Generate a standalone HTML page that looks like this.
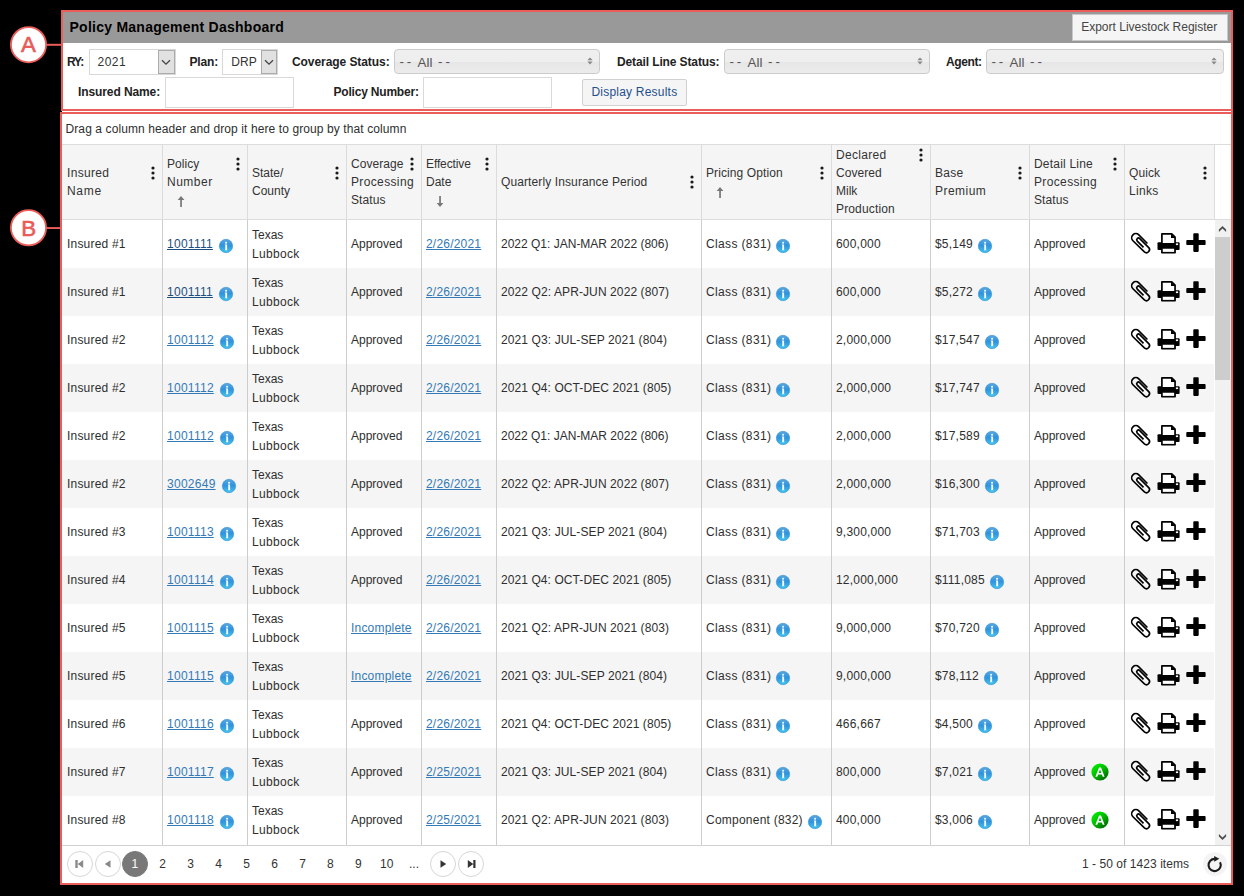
<!DOCTYPE html><html><head><meta charset="utf-8"><title>Policy Management Dashboard</title><style>
*{box-sizing:border-box;margin:0;padding:0}
html,body{width:1244px;height:896px;overflow:hidden;background:#000}
body{font-family:"Liberation Sans",sans-serif;font-size:12px;color:#333;position:relative}
.a{position:absolute}
.t{position:absolute;white-space:nowrap;line-height:19px;font-size:12px;color:#2e2e2e;letter-spacing:0.2px}
.z{letter-spacing:0}
.h{position:absolute;white-space:nowrap;line-height:18px;font-size:12px;color:#333}
.b{font-weight:bold;color:#222}
a.l{color:#337ab7;text-decoration:underline}
.lk{letter-spacing:.27px}
a.d{color:#1d4f80;text-decoration:underline}
.vl{position:absolute;width:1px;background:#cfcfcf}
.sel{position:absolute;height:25px;border:1px solid #cbcbcb;border-radius:4px;background:linear-gradient(#efefef 0,#eeeeee 50%,#e6e6e6 53%,#ececec 100%)}
.sel span{position:absolute;left:4.5px;top:3px;font-size:13.33px;line-height:19px;color:#555;white-space:nowrap}
.sel b{font-weight:normal;letter-spacing:2.9px;position:relative;top:-0.8px}
.inp{position:absolute;background:#fff;border:1px solid #d9d9d9}
.dd{position:absolute;background:#fff;border:1px solid #d8d8d8;height:26px}
.dd i{position:absolute;right:0;top:0;bottom:0;width:17px;background:#e1e1e1;border:1px solid #ababab}
.dd span{position:absolute;top:3px;font-size:12px;line-height:19px;color:#333}
.btn{position:absolute;background:#f5f5f5;border:1px solid #d0d0d0;border-radius:2px;font-size:12px;white-space:nowrap}
.pg{position:absolute;width:26px;height:26px;border-radius:13px;border:1px solid #d6d6d6;background:#fff}
.pn{position:absolute;width:28px;text-align:center;font-size:12px;line-height:19px;color:#333}
</style></head><body>
<svg width="0" height="0" style="position:absolute">
<defs>
<radialGradient id="gi" cx="50%" cy="35%" r="65%"><stop offset="0" stop-color="#3f9fe6"/><stop offset="0.7" stop-color="#2f94dc"/><stop offset="1" stop-color="#3bb6ea"/></radialGradient>
<linearGradient id="gi2" x1="0" y1="0" x2="0" y2="1"><stop offset="0" stop-color="#58a9e4"/><stop offset="0.45" stop-color="#2f93dc"/><stop offset="1" stop-color="#3fc4ee"/></linearGradient>
<linearGradient id="gg" x1="0.15" y1="0.1" x2="0.85" y2="0.9"><stop offset="0" stop-color="#00ee00"/><stop offset="0.5" stop-color="#00b800"/><stop offset="1" stop-color="#006a00"/></linearGradient>
<symbol id="info" viewBox="0 0 16 16"><circle cx="8" cy="8" r="6.7" fill="url(#gi2)" stroke="#3a8fd0" stroke-width="0.6"/><circle cx="8.1" cy="4.7" r="1.05" fill="#fff"/><path d="M6.8 6.5h2.3v5.3h0.3v0.4H6.9v-0.4h0.4V7.2H6.8z" fill="#fff"/></symbol>
<symbol id="ga" viewBox="0 0 18 18"><circle cx="9" cy="9" r="8.6" fill="url(#gg)"/><path d="M4.4 13.8L8 4.6H10L13.6 13.8H11.7L10.9 11.6H7.1L6.3 13.8ZM7.65 10.1H10.35L9 6.3Z" fill="#fff"/></symbol>
<symbol id="clip" viewBox="0 0 40 30"><g transform="rotate(45)"><path d="M26.1 -4.2 L13.9 -4.2 A4.15 4.15 0 0 0 13.9 4.1 L29.9 3.9 A3.08 3.08 0 0 0 29.9 -2.24 L17.2 -2.2 A1.74 1.74 0 0 0 17.2 1.3 L26.1 1.3" fill="none" stroke="#000" stroke-width="1.65"/></g></symbol>
<symbol id="prn" viewBox="0 0 40 30"><rect x="7.5" y="14.2" width="22.1" height="7.7" rx="1" fill="#000"/><path d="M11.9 15V5.85H21.7L25.05 9.2V15" fill="#fff" stroke="#000" stroke-width="1.7" stroke-linejoin="round"/><path d="M21 5.6V9.9H25.4z" fill="#000"/><rect x="25.9" y="15.4" width="2.2" height="1.7" fill="#fff"/><rect x="11.05" y="20.75" width="14.85" height="4.85" rx="0.8" fill="#000"/><rect x="12.75" y="20.75" width="11.4" height="3.15" fill="#fff"/></symbol>
<symbol id="plus" viewBox="0 0 20 20"><rect x="0.3" y="7.1" width="19.3" height="4.9" rx="0.8" fill="#000"/><rect x="7.3" y="0.2" width="5.4" height="18.7" rx="0.8" fill="#000"/></symbol>
<symbol id="dots" viewBox="0 0 4 14"><circle cx="2" cy="2" r="1.6" fill="#1a1a1a"/><circle cx="2" cy="7" r="1.6" fill="#1a1a1a"/><circle cx="2" cy="12" r="1.6" fill="#1a1a1a"/></symbol>
<symbol id="updn" viewBox="0 0 8 12"><path d="M4 1.4L6.6 4.2H1.4z" fill="#888"/><path d="M4 8.6L6.6 5.6H1.4z" fill="#888"/></symbol>
</defs></svg>
<svg class="a" style="left:0;top:0" width="64" height="260" viewBox="0 0 64 260"><rect x="46" y="43.8" width="16" height="2" fill="#eb5d5a"/><circle cx="28.5" cy="44.7" r="17.6" fill="#fff" stroke="#eb5d5a" stroke-width="1.8"/><rect x="46" y="227.1" width="15" height="1.9" fill="#eb5d5a"/><circle cx="28.5" cy="227.8" r="17.6" fill="#fff" stroke="#eb5d5a" stroke-width="1.8"/></svg>
<div class="a" style="left:10px;top:32.2px;width:37px;text-align:center;font-size:22.3px;line-height:26px;color:#e95a58;-webkit-text-stroke:0.6px #e95a58">A</div>
<div class="a" style="left:10.3px;top:215.8px;width:37px;text-align:center;font-size:22.3px;line-height:26px;color:#e95a58;-webkit-text-stroke:0.6px #e95a58">B</div>
<div class="a" style="left:61px;top:10px;width:1172px;height:101px;background:#fff;border-style:solid;border-width:2px;border-color:#eb5d5a #eb5d5a #eb5d5a #eb5d5a"></div>
<div class="a" style="left:63px;top:12px;width:1168px;height:31px;background:#999"></div>
<div class="a b" style="left:69.5px;top:18px;font-size:14px;line-height:18px;color:#000;white-space:nowrap;letter-spacing:0.25px">Policy Management Dashboard</div>
<div class="btn" style="left:1072px;top:14px;width:156px;height:27px;line-height:25px;padding-left:8.2px;color:#444;border-color:#c8c8c8;border-radius:0">Export Livestock Register</div>
<div class="h b" style="left:67px;top:53px;letter-spacing:-1.1px">RY:</div>
<div class="dd" style="left:89px;top:49px;width:87px"><span style="left:7.6px;letter-spacing:.45px">2021</span><i></i><svg class="a" style="left:71px;top:8.6px" width="10" height="7" viewBox="0 0 10 7"><path d="M1 1.2L5 5.2L9 1.2" fill="none" stroke="#444" stroke-width="1.3"/></svg></div>
<div class="h b" style="left:189.5px;top:53px;letter-spacing:-0.15px">Plan:</div>
<div class="dd" style="left:222px;top:49px;width:56px"><span style="left:8.2px;letter-spacing:.1px">DRP</span><i style="width:16px"></i><svg class="a" style="left:41.3px;top:8.6px" width="10" height="7" viewBox="0 0 10 7"><path d="M1 1.2L5 5.2L9 1.2" fill="none" stroke="#444" stroke-width="1.3"/></svg></div>
<div class="h b" style="left:292px;top:53px;letter-spacing:-0.07px">Coverage Status:</div>
<div class="sel" style="left:394px;top:49px;width:206px"><span><b>--</b><u style="text-decoration:none;margin:0 5.7px 0 3.4px">All</u><b>--</b></span><svg class="a" style="right:4.6px;top:5.5px" width="8" height="12"><use href="#updn"/></svg></div>
<div class="h b" style="left:617px;top:53px;letter-spacing:-0.12px">Detail Line Status:</div>
<div class="sel" style="left:724px;top:49px;width:206px"><span><b>--</b><u style="text-decoration:none;margin:0 5.7px 0 3.4px">All</u><b>--</b></span><svg class="a" style="right:4.6px;top:5.5px" width="8" height="12"><use href="#updn"/></svg></div>
<div class="h b" style="left:946px;top:53px;letter-spacing:-0.4px">Agent:</div>
<div class="sel" style="left:986px;top:49px;width:238px"><span><b>--</b><u style="text-decoration:none;margin:0 5.7px 0 3.4px">All</u><b>--</b></span><svg class="a" style="right:4.6px;top:5.5px" width="8" height="12"><use href="#updn"/></svg></div>
<div class="h b" style="left:78px;top:83px;letter-spacing:-0.1px">Insured Name:</div>
<div class="inp" style="left:165px;top:77px;width:129px;height:31px"></div>
<div class="h b" style="left:333.5px;top:83px;letter-spacing:-0.2px">Policy Number:</div>
<div class="inp" style="left:423px;top:77px;width:129px;height:31px"></div>
<div class="btn" style="left:582px;top:79px;width:105px;height:27px;line-height:24px;padding-left:8.4px;color:#1f4f8c;letter-spacing:0.22px">Display Results</div>
<div class="a" style="left:62px;top:111px;width:1169px;height:1px;background:#fff"></div>
<div class="a" style="left:1231px;top:111px;width:2px;height:1px;background:#eb5d5a"></div>
<div class="a" style="left:60px;top:112px;width:1173px;height:773px;background:#fff;border-style:solid;border-width:2px;border-color:#eb5d5a #eb5d5a #eb5d5a #eb5d5a"></div>
<div class="h" style="left:65.5px;top:120px;color:#2e2e2e;letter-spacing:.1px">Drag a column header and drop it here to group by that column</div>
<div class="a" style="left:62px;top:144px;width:1153px;height:76px;background:#f5f5f5;border-top:1px solid #dcdcdc;border-bottom:1px solid #dcdcdc"></div>
<div class="a" style="left:1215px;top:144px;width:16px;height:76px;background:#fff;border-top:1px solid #dcdcdc;border-bottom:1px solid #dcdcdc"></div>
<div class="h" style="left:67px;top:164px"><span style="letter-spacing:0.32px">Insured</span><br><span style="letter-spacing:0.7px">Name</span></div>
<svg class="a" style="left:150.8px;top:165.5px" width="4" height="14"><use href="#dots"/></svg>
<div class="h" style="left:167px;top:155px"><span style="letter-spacing:0.05px">Policy</span><br><span style="letter-spacing:0.5px">Number</span></div>
<svg class="a" style="left:176px;top:194px" width="10" height="14" viewBox="0 0 10 14"><path d="M5 1.9L8.4 6H5.9V13H4.2V6H1.7z" fill="#777"/></svg>
<svg class="a" style="left:235.8px;top:156.5px" width="4" height="14"><use href="#dots"/></svg>
<div class="h" style="left:252px;top:164px">State/<br>County</div>
<svg class="a" style="left:334.8px;top:165.5px" width="4" height="14"><use href="#dots"/></svg>
<div class="h" style="left:351px;top:155px"><span style="letter-spacing:0.05px">Coverage</span><br><span style="letter-spacing:0.36px">Processing</span><br><span style="letter-spacing:0.08px">Status</span></div>
<svg class="a" style="left:409.8px;top:156.5px" width="4" height="14"><use href="#dots"/></svg>
<div class="h" style="left:426px;top:155px"><span style="letter-spacing:-0.12px">Effective</span><br>Date</div>
<svg class="a" style="left:435px;top:194px" width="10" height="14" viewBox="0 0 10 14"><path d="M5 13.1L8.4 9H5.9V2H4.2V9H1.7z" fill="#777"/></svg>
<svg class="a" style="left:484.8px;top:156.5px" width="4" height="14"><use href="#dots"/></svg>
<div class="h" style="left:501px;top:173px"><span style="letter-spacing:0.11px">Quarterly Insurance Period</span></div>
<svg class="a" style="left:689.8px;top:174.5px" width="4" height="14"><use href="#dots"/></svg>
<div class="h" style="left:706px;top:164px"><span style="letter-spacing:0.1px">Pricing Option</span></div>
<svg class="a" style="left:715px;top:185px" width="10" height="14" viewBox="0 0 10 14"><path d="M5 1.9L8.4 6H5.9V13H4.2V6H1.7z" fill="#777"/></svg>
<svg class="a" style="left:819.8px;top:165.5px" width="4" height="14"><use href="#dots"/></svg>
<div class="h" style="left:836px;top:146px"><span style="letter-spacing:0.3px">Declared</span><br><span style="letter-spacing:0.05px">Covered</span><br>Milk<br><span style="letter-spacing:0.15px">Production</span></div>
<svg class="a" style="left:918.8px;top:147.5px" width="4" height="14"><use href="#dots"/></svg>
<div class="h" style="left:935px;top:164px"><span style="letter-spacing:0.3px">Base</span><br><span style="letter-spacing:0.47px">Premium</span></div>
<svg class="a" style="left:1017.8px;top:165.5px" width="4" height="14"><use href="#dots"/></svg>
<div class="h" style="left:1034px;top:155px"><span style="letter-spacing:0.2px">Detail Line</span><br><span style="letter-spacing:0.36px">Processing</span><br><span style="letter-spacing:0.08px">Status</span></div>
<svg class="a" style="left:1112.8px;top:156.5px" width="4" height="14"><use href="#dots"/></svg>
<div class="h" style="left:1129px;top:164px"><span style="letter-spacing:0.08px">Quick</span><br><span style="letter-spacing:0.3px">Links</span></div>
<svg class="a" style="left:1202.8px;top:165.5px" width="4" height="14"><use href="#dots"/></svg>
<div class="a" style="left:62px;top:220px;width:1152px;height:48px;background:#fff"></div>
<div class="t" style="left:67px;top:235px">Insured #1</div>
<div class="t lk" style="left:167px;top:235px"><a class="d">1001111</a><svg width="16" height="16" style="vertical-align:-5.5px;margin-left:5.1px"><use href="#info"/></svg></div>
<div class="t" style="left:252px;top:226px"><span class="z">Texas</span><br><span style="letter-spacing:.33px">Lubbock</span></div>
<div class="t z" style="left:351px;top:235px">Approved</div>
<div class="t" style="left:426px;top:235px"><a class="l">2/26/2021</a></div>
<div class="t" style="left:501px;top:235px;letter-spacing:0px">2022 Q1: JAN-MAR 2022 (806)</div>
<div class="t" style="left:706px;top:235px;letter-spacing:0.36px">Class (831)<svg width="16" height="16" style="vertical-align:-5.5px;margin-left:3.6px"><use href="#info"/></svg></div>
<div class="t" style="left:836px;top:235px">600,000</div>
<div class="t" style="left:935px;top:235px">$5,149<svg width="16" height="16" style="vertical-align:-5.5px;margin-left:4.3px"><use href="#info"/></svg></div>
<div class="t z" style="left:1034px;top:235px">Approved</div>
<svg class="a" style="left:1126px;top:228px" width="40" height="30"><use href="#clip"/></svg>
<svg class="a" style="left:1150px;top:228px" width="40" height="30"><use href="#prn"/></svg>
<svg class="a" style="left:1186px;top:233px" width="20" height="20"><use href="#plus"/></svg>
<div class="a" style="left:62px;top:268px;width:1152px;height:48px;background:#f5f5f5"></div>
<div class="t" style="left:67px;top:283px">Insured #1</div>
<div class="t lk" style="left:167px;top:283px"><a class="d">1001111</a><svg width="16" height="16" style="vertical-align:-5.5px;margin-left:5.1px"><use href="#info"/></svg></div>
<div class="t" style="left:252px;top:274px"><span class="z">Texas</span><br><span style="letter-spacing:.33px">Lubbock</span></div>
<div class="t z" style="left:351px;top:283px">Approved</div>
<div class="t" style="left:426px;top:283px"><a class="l">2/26/2021</a></div>
<div class="t" style="left:501px;top:283px;letter-spacing:0.1px">2022 Q2: APR-JUN 2022 (807)</div>
<div class="t" style="left:706px;top:283px;letter-spacing:0.36px">Class (831)<svg width="16" height="16" style="vertical-align:-5.5px;margin-left:3.6px"><use href="#info"/></svg></div>
<div class="t" style="left:836px;top:283px">600,000</div>
<div class="t" style="left:935px;top:283px">$5,272<svg width="16" height="16" style="vertical-align:-5.5px;margin-left:4.3px"><use href="#info"/></svg></div>
<div class="t z" style="left:1034px;top:283px">Approved</div>
<svg class="a" style="left:1126px;top:276px" width="40" height="30"><use href="#clip"/></svg>
<svg class="a" style="left:1150px;top:276px" width="40" height="30"><use href="#prn"/></svg>
<svg class="a" style="left:1186px;top:281px" width="20" height="20"><use href="#plus"/></svg>
<div class="a" style="left:62px;top:316px;width:1152px;height:48px;background:#fff"></div>
<div class="t" style="left:67px;top:331px">Insured #2</div>
<div class="t lk" style="left:167px;top:331px"><a class="l">1001112</a><svg width="16" height="16" style="vertical-align:-5.5px;margin-left:5.1px"><use href="#info"/></svg></div>
<div class="t" style="left:252px;top:322px"><span class="z">Texas</span><br><span style="letter-spacing:.33px">Lubbock</span></div>
<div class="t z" style="left:351px;top:331px">Approved</div>
<div class="t" style="left:426px;top:331px"><a class="l">2/26/2021</a></div>
<div class="t" style="left:501px;top:331px;letter-spacing:0.11px">2021 Q3: JUL-SEP 2021 (804)</div>
<div class="t" style="left:706px;top:331px;letter-spacing:0.36px">Class (831)<svg width="16" height="16" style="vertical-align:-5.5px;margin-left:3.6px"><use href="#info"/></svg></div>
<div class="t" style="left:836px;top:331px">2,000,000</div>
<div class="t" style="left:935px;top:331px">$17,547<svg width="16" height="16" style="vertical-align:-5.5px;margin-left:4.3px"><use href="#info"/></svg></div>
<div class="t z" style="left:1034px;top:331px">Approved</div>
<svg class="a" style="left:1126px;top:324px" width="40" height="30"><use href="#clip"/></svg>
<svg class="a" style="left:1150px;top:324px" width="40" height="30"><use href="#prn"/></svg>
<svg class="a" style="left:1186px;top:329px" width="20" height="20"><use href="#plus"/></svg>
<div class="a" style="left:62px;top:364px;width:1152px;height:48px;background:#f5f5f5"></div>
<div class="t" style="left:67px;top:379px">Insured #2</div>
<div class="t lk" style="left:167px;top:379px"><a class="l">1001112</a><svg width="16" height="16" style="vertical-align:-5.5px;margin-left:5.1px"><use href="#info"/></svg></div>
<div class="t" style="left:252px;top:370px"><span class="z">Texas</span><br><span style="letter-spacing:.33px">Lubbock</span></div>
<div class="t z" style="left:351px;top:379px">Approved</div>
<div class="t" style="left:426px;top:379px"><a class="l">2/26/2021</a></div>
<div class="t" style="left:501px;top:379px;letter-spacing:0.08px">2021 Q4: OCT-DEC 2021 (805)</div>
<div class="t" style="left:706px;top:379px;letter-spacing:0.36px">Class (831)<svg width="16" height="16" style="vertical-align:-5.5px;margin-left:3.6px"><use href="#info"/></svg></div>
<div class="t" style="left:836px;top:379px">2,000,000</div>
<div class="t" style="left:935px;top:379px">$17,747<svg width="16" height="16" style="vertical-align:-5.5px;margin-left:4.3px"><use href="#info"/></svg></div>
<div class="t z" style="left:1034px;top:379px">Approved</div>
<svg class="a" style="left:1126px;top:372px" width="40" height="30"><use href="#clip"/></svg>
<svg class="a" style="left:1150px;top:372px" width="40" height="30"><use href="#prn"/></svg>
<svg class="a" style="left:1186px;top:377px" width="20" height="20"><use href="#plus"/></svg>
<div class="a" style="left:62px;top:412px;width:1152px;height:48px;background:#fff"></div>
<div class="t" style="left:67px;top:427px">Insured #2</div>
<div class="t lk" style="left:167px;top:427px"><a class="l">1001112</a><svg width="16" height="16" style="vertical-align:-5.5px;margin-left:5.1px"><use href="#info"/></svg></div>
<div class="t" style="left:252px;top:418px"><span class="z">Texas</span><br><span style="letter-spacing:.33px">Lubbock</span></div>
<div class="t z" style="left:351px;top:427px">Approved</div>
<div class="t" style="left:426px;top:427px"><a class="l">2/26/2021</a></div>
<div class="t" style="left:501px;top:427px;letter-spacing:0px">2022 Q1: JAN-MAR 2022 (806)</div>
<div class="t" style="left:706px;top:427px;letter-spacing:0.36px">Class (831)<svg width="16" height="16" style="vertical-align:-5.5px;margin-left:3.6px"><use href="#info"/></svg></div>
<div class="t" style="left:836px;top:427px">2,000,000</div>
<div class="t" style="left:935px;top:427px">$17,589<svg width="16" height="16" style="vertical-align:-5.5px;margin-left:4.3px"><use href="#info"/></svg></div>
<div class="t z" style="left:1034px;top:427px">Approved</div>
<svg class="a" style="left:1126px;top:420px" width="40" height="30"><use href="#clip"/></svg>
<svg class="a" style="left:1150px;top:420px" width="40" height="30"><use href="#prn"/></svg>
<svg class="a" style="left:1186px;top:425px" width="20" height="20"><use href="#plus"/></svg>
<div class="a" style="left:62px;top:460px;width:1152px;height:48px;background:#f5f5f5"></div>
<div class="t" style="left:67px;top:475px">Insured #2</div>
<div class="t lk" style="left:167px;top:475px"><a class="l">3002649</a><svg width="16" height="16" style="vertical-align:-5.5px;margin-left:5.1px"><use href="#info"/></svg></div>
<div class="t" style="left:252px;top:466px"><span class="z">Texas</span><br><span style="letter-spacing:.33px">Lubbock</span></div>
<div class="t z" style="left:351px;top:475px">Approved</div>
<div class="t" style="left:426px;top:475px"><a class="l">2/26/2021</a></div>
<div class="t" style="left:501px;top:475px;letter-spacing:0.1px">2022 Q2: APR-JUN 2022 (807)</div>
<div class="t" style="left:706px;top:475px;letter-spacing:0.36px">Class (831)<svg width="16" height="16" style="vertical-align:-5.5px;margin-left:3.6px"><use href="#info"/></svg></div>
<div class="t" style="left:836px;top:475px">2,000,000</div>
<div class="t" style="left:935px;top:475px">$16,300<svg width="16" height="16" style="vertical-align:-5.5px;margin-left:4.3px"><use href="#info"/></svg></div>
<div class="t z" style="left:1034px;top:475px">Approved</div>
<svg class="a" style="left:1126px;top:468px" width="40" height="30"><use href="#clip"/></svg>
<svg class="a" style="left:1150px;top:468px" width="40" height="30"><use href="#prn"/></svg>
<svg class="a" style="left:1186px;top:473px" width="20" height="20"><use href="#plus"/></svg>
<div class="a" style="left:62px;top:508px;width:1152px;height:48px;background:#fff"></div>
<div class="t" style="left:67px;top:523px">Insured #3</div>
<div class="t lk" style="left:167px;top:523px"><a class="l">1001113</a><svg width="16" height="16" style="vertical-align:-5.5px;margin-left:5.1px"><use href="#info"/></svg></div>
<div class="t" style="left:252px;top:514px"><span class="z">Texas</span><br><span style="letter-spacing:.33px">Lubbock</span></div>
<div class="t z" style="left:351px;top:523px">Approved</div>
<div class="t" style="left:426px;top:523px"><a class="l">2/26/2021</a></div>
<div class="t" style="left:501px;top:523px;letter-spacing:0.11px">2021 Q3: JUL-SEP 2021 (804)</div>
<div class="t" style="left:706px;top:523px;letter-spacing:0.36px">Class (831)<svg width="16" height="16" style="vertical-align:-5.5px;margin-left:3.6px"><use href="#info"/></svg></div>
<div class="t" style="left:836px;top:523px">9,300,000</div>
<div class="t" style="left:935px;top:523px">$71,703<svg width="16" height="16" style="vertical-align:-5.5px;margin-left:4.3px"><use href="#info"/></svg></div>
<div class="t z" style="left:1034px;top:523px">Approved</div>
<svg class="a" style="left:1126px;top:516px" width="40" height="30"><use href="#clip"/></svg>
<svg class="a" style="left:1150px;top:516px" width="40" height="30"><use href="#prn"/></svg>
<svg class="a" style="left:1186px;top:521px" width="20" height="20"><use href="#plus"/></svg>
<div class="a" style="left:62px;top:556px;width:1152px;height:48px;background:#f5f5f5"></div>
<div class="t" style="left:67px;top:571px">Insured #4</div>
<div class="t lk" style="left:167px;top:571px"><a class="l">1001114</a><svg width="16" height="16" style="vertical-align:-5.5px;margin-left:5.1px"><use href="#info"/></svg></div>
<div class="t" style="left:252px;top:562px"><span class="z">Texas</span><br><span style="letter-spacing:.33px">Lubbock</span></div>
<div class="t z" style="left:351px;top:571px">Approved</div>
<div class="t" style="left:426px;top:571px"><a class="l">2/26/2021</a></div>
<div class="t" style="left:501px;top:571px;letter-spacing:0.08px">2021 Q4: OCT-DEC 2021 (805)</div>
<div class="t" style="left:706px;top:571px;letter-spacing:0.36px">Class (831)<svg width="16" height="16" style="vertical-align:-5.5px;margin-left:3.6px"><use href="#info"/></svg></div>
<div class="t" style="left:836px;top:571px">12,000,000</div>
<div class="t" style="left:935px;top:571px">$111,085<svg width="16" height="16" style="vertical-align:-5.5px;margin-left:4.3px"><use href="#info"/></svg></div>
<div class="t z" style="left:1034px;top:571px">Approved</div>
<svg class="a" style="left:1126px;top:564px" width="40" height="30"><use href="#clip"/></svg>
<svg class="a" style="left:1150px;top:564px" width="40" height="30"><use href="#prn"/></svg>
<svg class="a" style="left:1186px;top:569px" width="20" height="20"><use href="#plus"/></svg>
<div class="a" style="left:62px;top:604px;width:1152px;height:48px;background:#fff"></div>
<div class="t" style="left:67px;top:619px">Insured #5</div>
<div class="t lk" style="left:167px;top:619px"><a class="l">1001115</a><svg width="16" height="16" style="vertical-align:-5.5px;margin-left:5.1px"><use href="#info"/></svg></div>
<div class="t" style="left:252px;top:610px"><span class="z">Texas</span><br><span style="letter-spacing:.33px">Lubbock</span></div>
<div class="t" style="left:351px;top:619px"><a class="l">Incomplete</a></div>
<div class="t" style="left:426px;top:619px"><a class="l">2/26/2021</a></div>
<div class="t" style="left:501px;top:619px;letter-spacing:0.1px">2021 Q2: APR-JUN 2021 (803)</div>
<div class="t" style="left:706px;top:619px;letter-spacing:0.36px">Class (831)<svg width="16" height="16" style="vertical-align:-5.5px;margin-left:3.6px"><use href="#info"/></svg></div>
<div class="t" style="left:836px;top:619px">9,000,000</div>
<div class="t" style="left:935px;top:619px">$70,720<svg width="16" height="16" style="vertical-align:-5.5px;margin-left:4.3px"><use href="#info"/></svg></div>
<div class="t z" style="left:1034px;top:619px">Approved</div>
<svg class="a" style="left:1126px;top:612px" width="40" height="30"><use href="#clip"/></svg>
<svg class="a" style="left:1150px;top:612px" width="40" height="30"><use href="#prn"/></svg>
<svg class="a" style="left:1186px;top:617px" width="20" height="20"><use href="#plus"/></svg>
<div class="a" style="left:62px;top:652px;width:1152px;height:48px;background:#f5f5f5"></div>
<div class="t" style="left:67px;top:667px">Insured #5</div>
<div class="t lk" style="left:167px;top:667px"><a class="l">1001115</a><svg width="16" height="16" style="vertical-align:-5.5px;margin-left:5.1px"><use href="#info"/></svg></div>
<div class="t" style="left:252px;top:658px"><span class="z">Texas</span><br><span style="letter-spacing:.33px">Lubbock</span></div>
<div class="t" style="left:351px;top:667px"><a class="l">Incomplete</a></div>
<div class="t" style="left:426px;top:667px"><a class="l">2/26/2021</a></div>
<div class="t" style="left:501px;top:667px;letter-spacing:0.11px">2021 Q3: JUL-SEP 2021 (804)</div>
<div class="t" style="left:706px;top:667px;letter-spacing:0.36px">Class (831)<svg width="16" height="16" style="vertical-align:-5.5px;margin-left:3.6px"><use href="#info"/></svg></div>
<div class="t" style="left:836px;top:667px">9,000,000</div>
<div class="t" style="left:935px;top:667px">$78,112<svg width="16" height="16" style="vertical-align:-5.5px;margin-left:4.3px"><use href="#info"/></svg></div>
<div class="t z" style="left:1034px;top:667px">Approved</div>
<svg class="a" style="left:1126px;top:660px" width="40" height="30"><use href="#clip"/></svg>
<svg class="a" style="left:1150px;top:660px" width="40" height="30"><use href="#prn"/></svg>
<svg class="a" style="left:1186px;top:665px" width="20" height="20"><use href="#plus"/></svg>
<div class="a" style="left:62px;top:700px;width:1152px;height:48px;background:#fff"></div>
<div class="t" style="left:67px;top:715px">Insured #6</div>
<div class="t lk" style="left:167px;top:715px"><a class="l">1001116</a><svg width="16" height="16" style="vertical-align:-5.5px;margin-left:5.1px"><use href="#info"/></svg></div>
<div class="t" style="left:252px;top:706px"><span class="z">Texas</span><br><span style="letter-spacing:.33px">Lubbock</span></div>
<div class="t z" style="left:351px;top:715px">Approved</div>
<div class="t" style="left:426px;top:715px"><a class="l">2/26/2021</a></div>
<div class="t" style="left:501px;top:715px;letter-spacing:0.08px">2021 Q4: OCT-DEC 2021 (805)</div>
<div class="t" style="left:706px;top:715px;letter-spacing:0.36px">Class (831)<svg width="16" height="16" style="vertical-align:-5.5px;margin-left:3.6px"><use href="#info"/></svg></div>
<div class="t" style="left:836px;top:715px">466,667</div>
<div class="t" style="left:935px;top:715px">$4,500<svg width="16" height="16" style="vertical-align:-5.5px;margin-left:4.3px"><use href="#info"/></svg></div>
<div class="t z" style="left:1034px;top:715px">Approved</div>
<svg class="a" style="left:1126px;top:708px" width="40" height="30"><use href="#clip"/></svg>
<svg class="a" style="left:1150px;top:708px" width="40" height="30"><use href="#prn"/></svg>
<svg class="a" style="left:1186px;top:713px" width="20" height="20"><use href="#plus"/></svg>
<div class="a" style="left:62px;top:748px;width:1152px;height:48px;background:#f5f5f5"></div>
<div class="t" style="left:67px;top:763px">Insured #7</div>
<div class="t lk" style="left:167px;top:763px"><a class="l">1001117</a><svg width="16" height="16" style="vertical-align:-5.5px;margin-left:5.1px"><use href="#info"/></svg></div>
<div class="t" style="left:252px;top:754px"><span class="z">Texas</span><br><span style="letter-spacing:.33px">Lubbock</span></div>
<div class="t z" style="left:351px;top:763px">Approved</div>
<div class="t" style="left:426px;top:763px"><a class="l">2/25/2021</a></div>
<div class="t" style="left:501px;top:763px;letter-spacing:0.11px">2021 Q3: JUL-SEP 2021 (804)</div>
<div class="t" style="left:706px;top:763px;letter-spacing:0.36px">Class (831)<svg width="16" height="16" style="vertical-align:-5.5px;margin-left:3.6px"><use href="#info"/></svg></div>
<div class="t" style="left:836px;top:763px">800,000</div>
<div class="t" style="left:935px;top:763px">$7,021<svg width="16" height="16" style="vertical-align:-5.5px;margin-left:4.3px"><use href="#info"/></svg></div>
<div class="t z" style="left:1034px;top:763px">Approved<svg width="18" height="18" style="vertical-align:-5.4px;margin-left:5.5px"><use href="#ga"/></svg></div>
<svg class="a" style="left:1126px;top:756px" width="40" height="30"><use href="#clip"/></svg>
<svg class="a" style="left:1150px;top:756px" width="40" height="30"><use href="#prn"/></svg>
<svg class="a" style="left:1186px;top:761px" width="20" height="20"><use href="#plus"/></svg>
<div class="a" style="left:62px;top:796px;width:1152px;height:49px;background:#fff"></div>
<div class="t" style="left:67px;top:811px">Insured #8</div>
<div class="t lk" style="left:167px;top:811px"><a class="l">1001118</a><svg width="16" height="16" style="vertical-align:-5.5px;margin-left:5.1px"><use href="#info"/></svg></div>
<div class="t" style="left:252px;top:802px"><span class="z">Texas</span><br><span style="letter-spacing:.33px">Lubbock</span></div>
<div class="t z" style="left:351px;top:811px">Approved</div>
<div class="t" style="left:426px;top:811px"><a class="l">2/25/2021</a></div>
<div class="t" style="left:501px;top:811px;letter-spacing:0.1px">2021 Q2: APR-JUN 2021 (803)</div>
<div class="t" style="left:706px;top:811px;letter-spacing:0.23px">Component (832)<svg width="16" height="16" style="vertical-align:-5.5px;margin-left:4.4px"><use href="#info"/></svg></div>
<div class="t" style="left:836px;top:811px">400,000</div>
<div class="t" style="left:935px;top:811px">$3,006<svg width="16" height="16" style="vertical-align:-5.5px;margin-left:4.3px"><use href="#info"/></svg></div>
<div class="t z" style="left:1034px;top:811px">Approved<svg width="18" height="18" style="vertical-align:-5.4px;margin-left:5.5px"><use href="#ga"/></svg></div>
<svg class="a" style="left:1126px;top:804px" width="40" height="30"><use href="#clip"/></svg>
<svg class="a" style="left:1150px;top:804px" width="40" height="30"><use href="#prn"/></svg>
<svg class="a" style="left:1186px;top:809px" width="20" height="20"><use href="#plus"/></svg>
<div class="vl" style="left:162px;top:145px;height:74px;background:#dcdcdc"></div>
<div class="vl" style="left:162px;top:220px;height:625px;background:#cdcdcd"></div>
<div class="vl" style="left:247px;top:145px;height:74px;background:#dcdcdc"></div>
<div class="vl" style="left:247px;top:220px;height:625px;background:#cdcdcd"></div>
<div class="vl" style="left:346px;top:145px;height:74px;background:#dcdcdc"></div>
<div class="vl" style="left:346px;top:220px;height:625px;background:#cdcdcd"></div>
<div class="vl" style="left:421px;top:145px;height:74px;background:#dcdcdc"></div>
<div class="vl" style="left:421px;top:220px;height:625px;background:#cdcdcd"></div>
<div class="vl" style="left:496px;top:145px;height:74px;background:#dcdcdc"></div>
<div class="vl" style="left:496px;top:220px;height:625px;background:#cdcdcd"></div>
<div class="vl" style="left:701px;top:145px;height:74px;background:#dcdcdc"></div>
<div class="vl" style="left:701px;top:220px;height:625px;background:#cdcdcd"></div>
<div class="vl" style="left:831px;top:145px;height:74px;background:#dcdcdc"></div>
<div class="vl" style="left:831px;top:220px;height:625px;background:#cdcdcd"></div>
<div class="vl" style="left:930px;top:145px;height:74px;background:#dcdcdc"></div>
<div class="vl" style="left:930px;top:220px;height:625px;background:#cdcdcd"></div>
<div class="vl" style="left:1029px;top:145px;height:74px;background:#dcdcdc"></div>
<div class="vl" style="left:1029px;top:220px;height:625px;background:#cdcdcd"></div>
<div class="vl" style="left:1124px;top:145px;height:74px;background:#dcdcdc"></div>
<div class="vl" style="left:1124px;top:220px;height:625px;background:#cdcdcd"></div>
<div class="vl" style="left:1214px;top:145px;height:74px;background:#dcdcdc"></div>
<div class="a" style="left:1215px;top:220px;width:16px;height:625px;background:#f1f1f1"></div>
<div class="a" style="left:1215px;top:237px;width:15px;height:143px;background:#cdcdcd"></div>
<svg class="a" style="left:1218px;top:225px" width="10" height="8" viewBox="0 0 10 8"><path d="M4.5 1L8.1 4.6V7.1L4.5 3.6L0.9 7.1V4.6z" fill="#4d4d4d"/></svg>
<svg class="a" style="left:1218px;top:833px" width="10" height="8" viewBox="0 0 10 8"><path d="M4.5 7L8.1 3.4V0.9L4.5 4.4L0.9 0.9V3.4z" fill="#4d4d4d"/></svg>
<div class="a" style="left:62px;top:845px;width:1169px;height:38px;background:#fff;border-top:1px solid #d2d2d2"></div>
<div class="pg" style="left:67px;top:851px"></div>
<svg class="a" style="left:75px;top:859px" width="10" height="10" viewBox="0 0 10 10"><path d="M0.3 1h2.4v8H0.3zM8.2 1V9L2.7 5z" fill="#8a8a8a"/></svg>
<div class="pg" style="left:95px;top:851px"></div>
<svg class="a" style="left:103px;top:859px" width="10" height="10" viewBox="0 0 10 10"><path d="M7.5 1.2V8.8L1.8 5z" fill="#888"/></svg>
<div class="pg" style="left:122px;top:851px;background:#787878;border-color:#787878"></div>
<div class="pn" style="left:120.9px;top:855px;color:#fff">1</div>
<div class="pn" style="left:148.5px;top:855px;color:#333">2</div>
<div class="pn" style="left:176.5px;top:855px;color:#333">3</div>
<div class="pn" style="left:204.5px;top:855px;color:#333">4</div>
<div class="pn" style="left:232.5px;top:855px;color:#333">5</div>
<div class="pn" style="left:260.5px;top:855px;color:#333">6</div>
<div class="pn" style="left:288.5px;top:855px;color:#333">7</div>
<div class="pn" style="left:316.3px;top:855px;color:#333">8</div>
<div class="pn" style="left:344.3px;top:855px;color:#333">9</div>
<div class="pn" style="left:372.7px;top:855px;color:#333">10</div>
<div class="pn" style="left:400px;top:855px">...</div>
<div class="pg" style="left:430px;top:851px"></div>
<svg class="a" style="left:438px;top:859px" width="10" height="10" viewBox="0 0 10 10"><path d="M2.5 1.2V8.8L8.2 5z" fill="#333"/></svg>
<div class="pg" style="left:458px;top:851px"></div>
<svg class="a" style="left:466px;top:859px" width="10" height="10" viewBox="0 0 10 10"><path d="M7.3 1h2.2v8H7.3zM1.8 1V9L7.3 5z" fill="#333"/></svg>
<div class="t z" style="left:1082px;top:855px;color:#333;letter-spacing:.05px">1 - 50 of 1423 items</div>
<div class="a" style="left:1203px;top:852px;width:24px;height:24px;border-radius:12px;background:#f4f4f4"></div>
<svg class="a" style="left:1205px;top:854px" width="20" height="20" viewBox="0 0 20 20"><path d="M9.8 4.9A6.1 6.1 0 1 0 15.05 8.2" fill="none" stroke="#1c1c1c" stroke-width="2.1"/><path d="M9.2 1.9L14.3 4.85L9.2 7.8z" fill="#1c1c1c"/></svg>
</body></html>
